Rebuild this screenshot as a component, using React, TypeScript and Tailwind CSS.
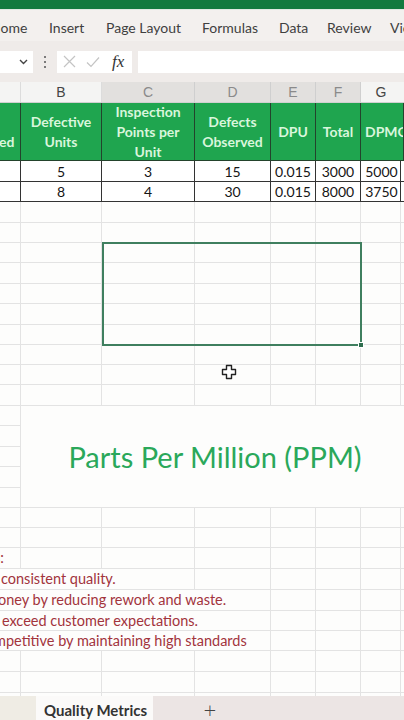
import React from "react";

const GL = "border-[#e3e3e3]";

function GridRow({ h }: { h: string }) {
  return (
    <div className={`flex ${h}`}>
      <div className={`w-[21px] shrink-0 border-r border-b ${GL}`} />
      <div className={`w-[81px] shrink-0 border-r border-b ${GL}`} />
      <div className={`w-[93px] shrink-0 border-r border-b ${GL}`} />
      <div className={`w-[76px] shrink-0 border-r border-b ${GL}`} />
      <div className={`w-[45px] shrink-0 border-r border-b ${GL}`} />
      <div className={`w-[45px] shrink-0 border-r border-b ${GL}`} />
      <div className={`w-[40px] shrink-0 border-r border-b ${GL}`} />
      <div className={`flex-1 border-b ${GL}`} />
    </div>
  );
}

function TextRow({ h, text, span, offset }: { h: string; text: string; span: "a" | "c" | "d"; offset: string }) {
  return (
    <div className={`flex ${h}`}>
      {span === "a" && <div className={`w-[21px] shrink-0 border-r border-b ${GL} overflow-hidden flex items-center`}><span className={`whitespace-nowrap ${offset}`}>{text}</span></div>}
      {span === "c" && <div className={`w-[195px] shrink-0 border-r border-b ${GL} overflow-hidden flex items-center`}><span className={`whitespace-nowrap ${offset}`}>{text}</span></div>}
      {span === "d" && <div className={`w-[271px] shrink-0 border-r border-b ${GL} overflow-hidden flex items-center`}><span className={`whitespace-nowrap ${offset}`}>{text}</span></div>}
      {span === "a" && <div className={`w-[81px] shrink-0 border-r border-b ${GL}`} />}
      {span === "a" && <div className={`w-[93px] shrink-0 border-r border-b ${GL}`} />}
      {(span === "a" || span === "c") && <div className={`w-[76px] shrink-0 border-r border-b ${GL}`} />}
      <div className={`w-[45px] shrink-0 border-r border-b ${GL}`} />
      <div className={`w-[45px] shrink-0 border-r border-b ${GL}`} />
      <div className={`w-[40px] shrink-0 border-r border-b ${GL}`} />
      <div className={`flex-1 border-b ${GL}`} />
    </div>
  );
}

const HC = "shrink-0 border-r border-b border-[#23432c] flex flex-col items-center justify-center text-center font-bold text-[14px] leading-[20px] text-[#d9f6dc]";
const DC = "shrink-0 border-r border-b border-[#333333] flex items-center justify-center text-[14px] text-[#151515]";

export default function App() {
  return (
    <div className="w-[404px] h-[720px] overflow-hidden bg-[#fdfdfc] flex flex-col" style={{ fontFamily: "Lato, 'Liberation Sans', sans-serif" }}>
      {/* title bar */}
      <div className="h-[9px] bg-[#127a3f] shrink-0" />
      <div className="h-[1px] bg-[#dfe9e2] shrink-0" />
      {/* ribbon tabs */}
      <div className="h-[31px] pt-[3px] bg-[#f3f0ee] shrink-0 flex items-center text-[14px] text-[#3f3f3f] whitespace-nowrap overflow-hidden">
        <div className="w-[59px] -ml-[10px] shrink-0">Home</div>
        <div className="w-[57px] shrink-0">Insert</div>
        <div className="w-[96px] shrink-0">Page Layout</div>
        <div className="w-[77px] shrink-0">Formulas</div>
        <div className="w-[48px] shrink-0">Data</div>
        <div className="w-[63px] shrink-0">Review</div>
        <div className="shrink-0">View</div>
      </div>
      {/* formula bar */}
      <div className="h-[41px] bg-[#efebe9] shrink-0 flex items-center">
        <div className="w-[33px] h-[22px] bg-white flex items-center justify-end pr-[5px]">
          <svg width="9" height="6" viewBox="0 0 9 6"><path d="M1 1l3.5 3.5L8 1" fill="none" stroke="#444" strokeWidth="1.4" /></svg>
        </div>
        <div className="w-[24px] flex flex-col items-center gap-[3px]">
          <div className="w-[2px] h-[2px] bg-[#555] rounded-full" />
          <div className="w-[2px] h-[2px] bg-[#555] rounded-full" />
          <div className="w-[2px] h-[2px] bg-[#555] rounded-full" />
        </div>
        <div className="w-[75px] h-[22px] bg-white flex items-center pl-[6px]">
          <svg width="13" height="13" viewBox="0 0 13 13"><path d="M1 1l11 11M12 1L1 12" stroke="#c4c4c4" strokeWidth="1.2" /></svg>
          <svg className="ml-[10px]" width="14" height="12" viewBox="0 0 14 12"><path d="M1 6.5l4 4L13 1.5" fill="none" stroke="#c4c4c4" strokeWidth="1.2" /></svg>
          <span className="ml-[12px] italic text-[17px] text-[#333] leading-none" style={{ fontFamily: "'Liberation Serif', serif" }}>fx</span>
        </div>
        <div className="ml-[6px] flex-1 h-[22px] bg-white" />
      </div>
      {/* column headers */}
      <div className="h-[21px] shrink-0 flex text-[14px] border-b border-[#d0d0d0]" style={{ fontFamily: "'Liberation Sans', sans-serif" }}>
        <div className="w-[21px] bg-[#f4f4f3] border-r border-[#dcdcdc]" />
        <div className="w-[81px] bg-[#f4f4f3] border-r border-[#dcdcdc] flex items-center justify-center text-[#444]">B</div>
        <div className="w-[93px] bg-[#e2e0de] border-r border-[#cfcfcf] flex items-center justify-center text-[#8a8a8a]">C</div>
        <div className="w-[76px] bg-[#e2e0de] border-r border-[#cfcfcf] flex items-center justify-center text-[#8a8a8a]">D</div>
        <div className="w-[45px] bg-[#e2e0de] border-r border-[#cfcfcf] flex items-center justify-center text-[#8a8a8a]">E</div>
        <div className="w-[45px] bg-[#e2e0de] border-r border-[#cfcfcf] flex items-center justify-center text-[#8a8a8a]">F</div>
        <div className="flex-1 bg-[#f4f4f3] flex items-center justify-center text-[#444] pr-[3px]">G</div>
      </div>
      {/* sheet body */}
      <div className="relative flex-1 overflow-hidden">
        {/* green header */}
        <div className="flex h-[58px] bg-[#1fa54f]">
          <div className={`w-[21px] ${HC} items-start overflow-hidden`}><span>&nbsp;</span><span className="-ml-[1px]">ed</span></div>
          <div className={`w-[81px] ${HC}`}><span>Defective</span><span>Units</span></div>
          <div className={`w-[93px] ${HC}`}><span>Inspection</span><span>Points per</span><span>Unit</span></div>
          <div className={`w-[76px] ${HC}`}><span>Defects</span><span>Observed</span></div>
          <div className={`w-[45px] ${HC}`}>DPU</div>
          <div className={`w-[45px] ${HC}`}>Total</div>
          <div className={`flex-1 ${HC} items-start overflow-hidden`}><span className="pl-[4px] whitespace-nowrap">DPMO</span></div>
        </div>
        {/* data rows */}
        {[["5", "3", "15", "0.015", "3000", "5000", "h-[21px]"], ["8", "4", "30", "0.015", "8000", "3750", "h-[20px]"]].map((r, i) => (
          <div key={i} className={`flex ${r[6]} bg-white`}>
            <div className={`w-[21px] ${DC}`} />
            <div className={`w-[81px] ${DC}`}>{r[0]}</div>
            <div className={`w-[93px] ${DC}`}>{r[1]}</div>
            <div className={`w-[76px] ${DC}`}>{r[2]}</div>
            <div className={`w-[45px] ${DC}`}>{r[3]}</div>
            <div className={`w-[45px] ${DC}`}>{r[4]}</div>
            <div className={`w-[40px] ${DC} pl-[2px]`}>{r[5]}</div>
            <div className={`flex-1 border-b border-[#333333]`} />
          </div>
        ))}
        <GridRow h="h-[21px]" />
        <GridRow h="h-[20px]" />
        <GridRow h="h-[20px]" />
        <GridRow h="h-[21px]" />
        <GridRow h="h-[20px]" />
        <GridRow h="h-[21px]" />
        <GridRow h="h-[20px]" />
        <GridRow h="h-[20px]" />
        <GridRow h="h-[20px]" />
        <GridRow h="h-[21px]" />
        {/* merged title */}
        <div className="flex h-[102px]">
          <div className="w-[21px] shrink-0 flex flex-col">
            <div className={`h-[20px] border-r border-b ${GL}`} />
            <div className={`h-[21px] border-r border-b ${GL}`} />
            <div className={`h-[20px] border-r border-b ${GL}`} />
            <div className={`h-[21px] border-r border-b ${GL}`} />
            <div className={`h-[20px] border-r border-b ${GL}`} />
          </div>
          <div className={`flex-1 border-b ${GL} flex items-center justify-center pl-[5px] text-[29px] text-[#2aa85a]`}>
            Parts Per Million (PPM)
          </div>
        </div>
        <GridRow h="h-[20px]" />
        <GridRow h="h-[20px]" />
        <div className="text-[14.5px] text-[#a2343c]">
          <TextRow h="h-[21px]" text="Benefits:" span="a" offset="-ml-[52px]" />
          <TextRow h="h-[21px]" text="consistent quality." span="c" offset="ml-[1px]" />
          <TextRow h="h-[21px]" text="money by reducing rework and waste." span="d" offset="-ml-[14px]" />
          <TextRow h="h-[20px]" text="or exceed customer expectations." span="d" offset="-ml-[15px]" />
          <TextRow h="h-[20px]" text="competitive by maintaining high standards" span="d" offset="-ml-[21px]" />
        </div>
        <GridRow h="h-[21px]" />
        <GridRow h="h-[21px]" />
        <GridRow h="h-[21px]" />
        {/* selection box */}
        <div className="absolute left-[102px] top-[139px] w-[260px] h-[104px] border-2 border-[#3f7f5f]" />
        <div className="absolute left-[358px] top-[239px] w-[6px] h-[6px] bg-[#2f6e4f] border border-white" />
        {/* cursor */}
        <svg className="absolute left-[221px] top-[261px]" width="16" height="16" viewBox="0 0 16 16">
          <path d="M5.5 1.5h5v4h4v5h-4v4h-5v-4h-4v-5h4z" fill="#fff" stroke="#222" strokeWidth="1.4" strokeLinejoin="round" />
        </svg>
      </div>
      {/* sheet tabs */}
      <div className="h-[24px] shrink-0 flex bg-[#ece5e4]">
        <div className="w-[36px] bg-[#efece4]" />
        <div className="w-[117px] bg-[#fbfaf9] flex items-center pt-[4px] pl-[8px] font-bold text-[15px] text-[#333]">Quality Metrics</div>
        <div className="w-[114px] flex items-center justify-center pt-[4px] text-[22px] font-light text-[#444] leading-none">+</div>
      </div>
    </div>
  );
}
